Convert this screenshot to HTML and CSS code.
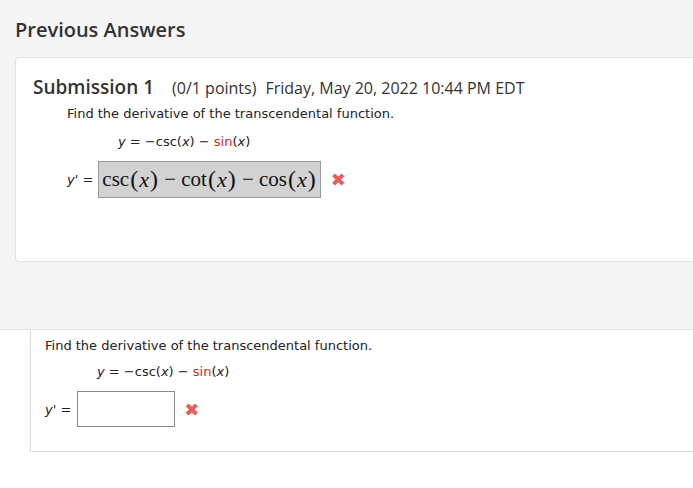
FILE: index.html
```html
<!DOCTYPE html>
<html>
<head>
<meta charset="utf-8">
<link rel="stylesheet" href="styles.css">
</head>
<body>
<div class="prev">
  <h2 class="prev-title">Previous Answers</h2>
  <div class="card">
    <div class="sub-head"><span class="sub-name">Submission 1</span><span class="sub-meta">(0/1 points)</span><span class="sub-meta">Friday, May 20, 2022 10:44 PM EDT</span></div>
    <div class="q">
      <p class="q-text">Find the derivative of the transcendental function.</p>
      <p class="q-eq"><i>y</i> = −csc(<i>x</i>) − <span class="red">sin</span>(<i>x</i>)</p>
      <div class="ans-row">
        <span class="lbl"><i>y'</i> =</span>
        <span class="ans-box">csc<span class="p">(</span><i>x</i><span class="p">)</span> − cot<span class="p">(</span><i>x</i><span class="p">)</span> − cos<span class="p">(</span><i>x</i><span class="p">)</span></span>
        <span class="xmark">✖</span>
      </div>
    </div>
  </div>
</div>
<div class="current">
  <div class="q2">
    <p class="q-text">Find the derivative of the transcendental function.</p>
    <p class="q-eq"><i>y</i> = −csc(<i>x</i>) − <span class="red">sin</span>(<i>x</i>)</p>
    <div class="ans-row2">
      <span class="lbl"><i>y'</i> =</span>
      <span class="input"></span>
      <span class="xmark">✖</span>
    </div>
  </div>
</div>
</body>
</html>
```
FILE: styles.css
```css
html, body { margin: 0; padding: 0; background: #fff; overflow: hidden; }
body { width: 693px; height: 488px; }

.prev {
  background: #f5f5f5;
  height: 330px;
  padding: 18px 0 0 15px;
  box-sizing: border-box;
  border-bottom: 1px solid #e2e2e2;
}
.prev-title {
  margin: 0 0 15px 0;
  font-family: "Open Sans", sans-serif;
  font-weight: 600;
  font-size: 20px;
  line-height: 24px;
  color: #333;
}
.card {
  background: #fff;
  border: 1px solid #e2e2e2;
  border-right: none;
  border-radius: 4px 0 0 4px;
  height: 205px;
  box-sizing: border-box;
  padding: 16px 0 0 17px;
}
.sub-head {
  display: flex;
  align-items: baseline;
  font-family: "Open Sans", sans-serif;
  color: #333;
}
.sub-name { font-size: 19px; font-weight: 600; margin-right: 18px; }
.sub-meta { font-size: 16px; margin-right: 9px; }

.q { padding: 4px 0 0 34px; }
.q-text {
  margin: 0;
  font-family: "DejaVu Sans", Verdana, sans-serif;
  font-size: 13px;
  color: #222;
  line-height: 20px;
}
.q-eq {
  margin: 10px 0 0 51px;
  font-family: "DejaVu Sans", Verdana, sans-serif;
  font-size: 13px;
  color: #222;
  line-height: 16px;
}
.red { color: #d62828; }
.ans-row {
  display: flex;
  align-items: center;
  margin-top: 11px;
  font-family: "DejaVu Sans", Verdana, sans-serif;
  font-size: 13px;
  color: #222;
}
.lbl { margin-right: 5px; }
.ans-box {
  display: inline-flex;
  align-items: center;
  height: 37px;
  box-sizing: border-box;
  padding: 0 3px 0 3px;
  background: #d2d2d2;
  border: 1px solid #9a9a9a;
  font-family: "Liberation Serif", "Times New Roman", serif;
  font-size: 21px;
  color: #111;
  white-space: pre;
}
.ans-box i { font-size: 22px; }
.ans-box .p { font-size: 24px; margin: 0 1px; }
.xmark {
  color: #e85c5c;
  font-size: 18px;
  margin-left: 10px;
  font-family: "DejaVu Sans", sans-serif;
}

.current { padding-left: 30px; }
.q2 {
  border-left: 1px solid #dcdcdc;
  border-bottom: 1px solid #dcdcdc;
  height: 122px;
  box-sizing: border-box;
  padding: 6px 0 0 14px;
}
.q2 .q-eq { margin: 8px 0 0 52px; }
.ans-row2 {
  display: flex;
  align-items: center;
  margin-top: 11px;
  font-family: "DejaVu Sans", Verdana, sans-serif;
  font-size: 13px;
  color: #222;
}
.input {
  width: 98px;
  height: 36px;
  box-sizing: border-box;
  border: 1px solid #888;
  background: #fff;
  margin-left: 1px;
}
.ans-row2 .xmark { margin-left: 9px; }
```
